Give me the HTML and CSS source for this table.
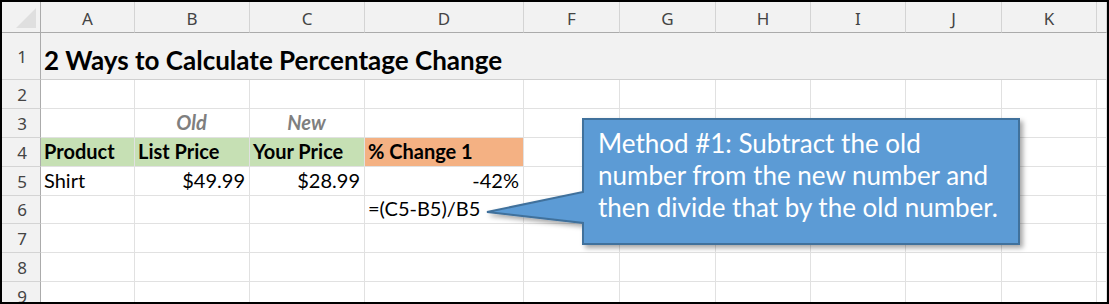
FILE: index.html
```html
<!doctype html>
<html lang="en">
<head>
    <meta charset="utf-8">
    <title>Percentage Change</title>
    <link rel="stylesheet" href="styles.css">
</head>
<body>
    <div class="frame">
        <div class="sheet">
            <!-- column headers -->
            <div class="corner"><span class="tri"></span></div>
            <div class="col-h">A</div>
            <div class="col-h">B</div>
            <div class="col-h">C</div>
            <div class="col-h">D</div>
            <div class="col-h">F</div>
            <div class="col-h">G</div>
            <div class="col-h">H</div>
            <div class="col-h">I</div>
            <div class="col-h">J</div>
            <div class="col-h">K</div>
            <div class="col-h"></div>

            <!-- row 1 -->
            <div class="row-h">1</div>
            <div class="cell title">2 Ways to Calculate Percentage Change</div>

            <!-- row 2 -->
            <div class="row-h">2</div>
            <div class="cell"></div><div class="cell"></div><div class="cell"></div><div class="cell"></div>
            <div class="cell"></div><div class="cell"></div><div class="cell"></div><div class="cell"></div>
            <div class="cell"></div><div class="cell"></div><div class="cell"></div>

            <!-- row 3 -->
            <div class="row-h">3</div>
            <div class="cell"></div>
            <div class="cell label">Old</div>
            <div class="cell label">New</div>
            <div class="cell"></div>
            <div class="cell"></div><div class="cell"></div><div class="cell"></div><div class="cell"></div>
            <div class="cell"></div><div class="cell"></div><div class="cell"></div>

            <!-- row 4 -->
            <div class="row-h">4</div>
            <div class="cell head green">Product</div>
            <div class="cell head green">List Price</div>
            <div class="cell head green">Your Price</div>
            <div class="cell head orange">% Change 1</div>
            <div class="cell"></div><div class="cell"></div><div class="cell"></div><div class="cell"></div>
            <div class="cell"></div><div class="cell"></div><div class="cell"></div>

            <!-- row 5 -->
            <div class="row-h">5</div>
            <div class="cell">Shirt</div>
            <div class="cell num">$49.99</div>
            <div class="cell num">$28.99</div>
            <div class="cell num">-42%</div>
            <div class="cell"></div><div class="cell"></div><div class="cell"></div><div class="cell"></div>
            <div class="cell"></div><div class="cell"></div><div class="cell"></div>

            <!-- row 6 -->
            <div class="row-h">6</div>
            <div class="cell"></div><div class="cell"></div><div class="cell"></div>
            <div class="cell">=(C5-B5)/B5</div>
            <div class="cell"></div><div class="cell"></div><div class="cell"></div><div class="cell"></div>
            <div class="cell"></div><div class="cell"></div><div class="cell"></div>

            <!-- rows 7-9 -->
            <div class="row-h">7</div>
            <div class="cell"></div><div class="cell"></div><div class="cell"></div><div class="cell"></div>
            <div class="cell"></div><div class="cell"></div><div class="cell"></div><div class="cell"></div>
            <div class="cell"></div><div class="cell"></div><div class="cell"></div>

            <div class="row-h">8</div>
            <div class="cell"></div><div class="cell"></div><div class="cell"></div><div class="cell"></div>
            <div class="cell"></div><div class="cell"></div><div class="cell"></div><div class="cell"></div>
            <div class="cell"></div><div class="cell"></div><div class="cell"></div>

            <div class="row-h">9</div>
            <div class="cell"></div><div class="cell"></div><div class="cell"></div><div class="cell"></div>
            <div class="cell"></div><div class="cell"></div><div class="cell"></div><div class="cell"></div>
            <div class="cell"></div><div class="cell"></div><div class="cell"></div>
        </div>

        <!-- callout bubble pointing at the formula in D6 -->
        <svg class="callout-shape" width="1105" height="300" viewBox="0 0 1105 300">
            <defs>
                <filter id="shadow" x="-10%" y="-10%" width="130%" height="140%">
                    <feDropShadow dx="3" dy="3" stdDeviation="2.5" flood-color="#000" flood-opacity="0.35"/>
                </filter>
            </defs>
            <path d="M581 117 H1017 V242 H581 V221 L485 210 L581 190 Z"
                  fill="#5b9bd5" stroke="#41719c" stroke-width="2" filter="url(#shadow)"/>
        </svg>
        <div class="callout-text">
            Method #1: Subtract the old<br>
            number from the new number and<br>
            then divide that by the old number.
        </div>
    </div>
</body>
</html>
```

FILE: styles.css
```css
html, body {
    margin: 0;
    padding: 0;
    background: #fff;
}
.frame {
    position: relative;
    width: 1109px;
    height: 304px;
    box-sizing: border-box;
    border: 2px solid #000;
    overflow: hidden;
}
.sheet {
    display: grid;
    grid-template-columns: 39px 94px 115px 115px 159px 96px 96px 95px 95px 96px 95px 1fr;
    grid-template-rows: 31px 47px 29px 29px 29px 29px 28px 29px 29px 29px;
    font-family: Lato, "Liberation Sans", sans-serif;
    font-size: 20px;
    color: #000;
}
.sheet > div {
    box-sizing: border-box;
    border-right: 1px solid #e1e1e1;
    border-bottom: 1px solid #e1e1e1;
    white-space: nowrap;
}
.corner {
    position: relative;
    background: #f2f2f2;
    border-right: 1px solid #ababab !important;
    border-bottom: 1px solid #ababab !important;
}
.corner .tri {
    position: absolute;
    right: 4px;
    bottom: 4px;
    width: 0;
    height: 0;
    border-left: 20px solid transparent;
    border-bottom: 20px solid #dfdfdf;
}
.col-h, .row-h {
    background: #f2f2f2;
    color: #444;
    font-family: "Noto Sans", "Open Sans", sans-serif;
    font-size: 17px;
    display: flex;
    align-items: center;
    justify-content: center;
}
.col-h {
    border-right: 1px solid #d4d4d4 !important;
    border-bottom: 1px solid #ababab !important;
    padding-top: 2px;
}
.row-h {
    border-right: 1px solid #ababab !important;
    border-bottom: 1px solid #d4d4d4 !important;
    padding-left: 2px;
}
.cell {
    display: flex;
    align-items: flex-end;
    padding: 0 4px 3px 3px;
    overflow: visible;
}
.cell.title {
    grid-column: 2 / -1;
    background: #f2f2f2;
    border-bottom: 1px solid #d0d0d0;
    font-size: 26px;
    font-weight: 700;
    padding-bottom: 3px;
}
.cell.label {
    justify-content: center;
    color: #7f7f7f;
    font-style: italic;
    font-weight: 700;
}
.cell.head {
    font-weight: 700;
}
.cell.green {
    background: #c6e0b4;
}
.cell.orange {
    background: #f4b183;
}
.cell.num {
    justify-content: flex-end;
}
.callout-shape {
    position: absolute;
    left: 0;
    top: 0;
    pointer-events: none;
}
.callout-text {
    position: absolute;
    left: 596px;
    top: 125px;
    color: #fff;
    font-family: Lato, "Liberation Sans", sans-serif;
    font-size: 26px;
    line-height: 32px;
}
```
